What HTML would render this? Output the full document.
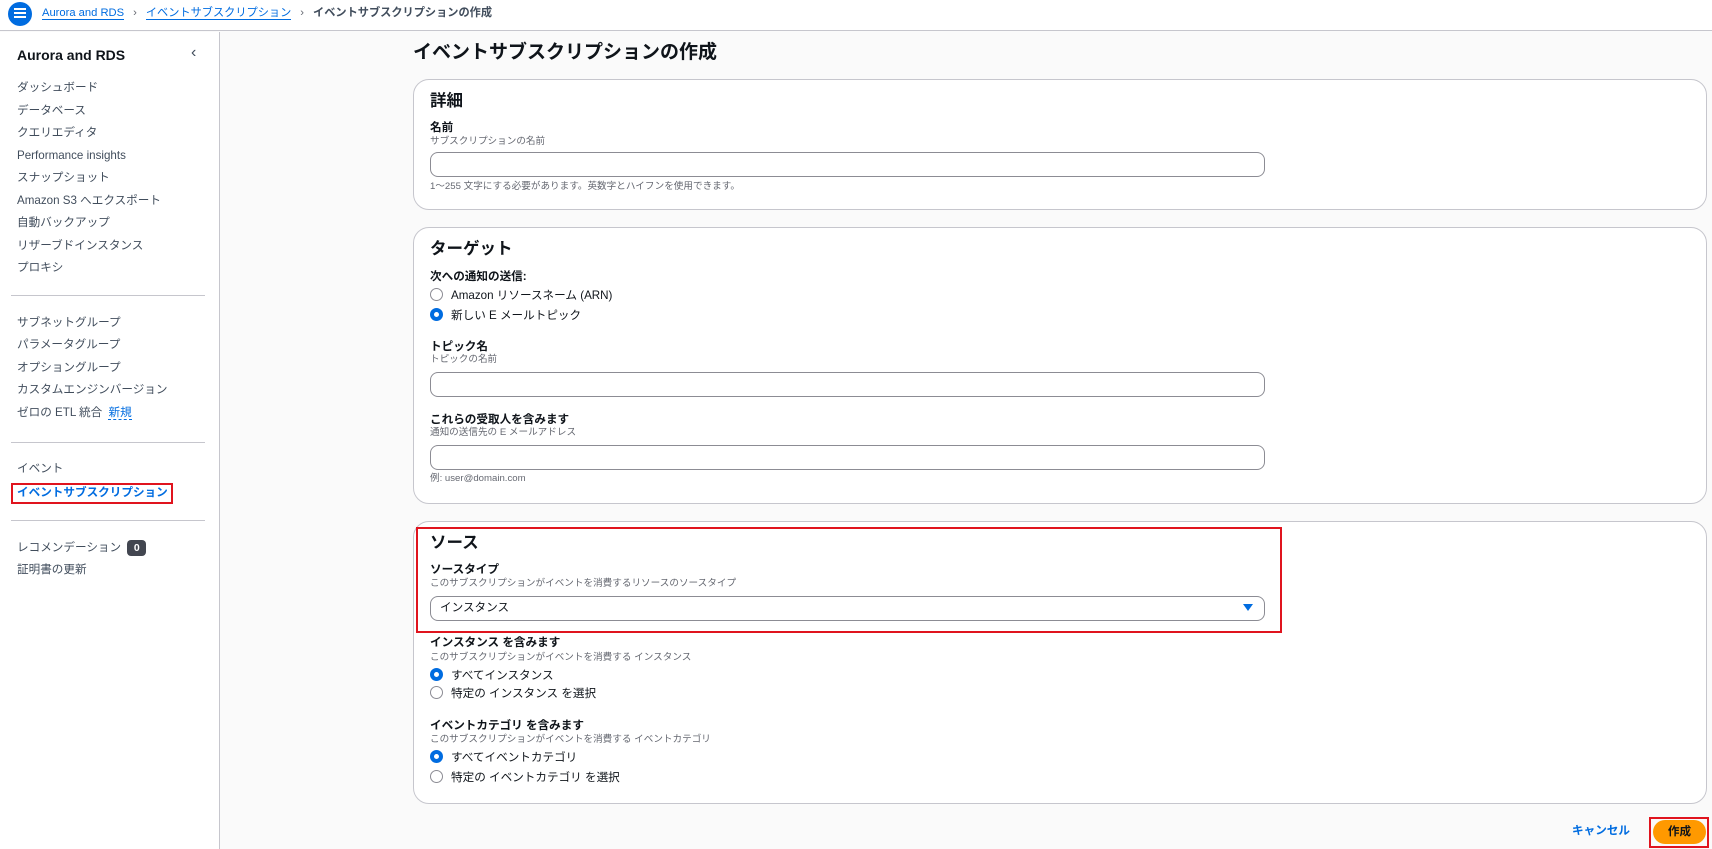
<!DOCTYPE html>
<html><head><meta charset="utf-8"><style>
*{box-sizing:border-box;margin:0;padding:0}
body{width:1712px;height:849px;overflow:hidden;background:#fafafa;font-family:"Liberation Sans","Noto Sans CJK JP",sans-serif;color:#0f141a;position:relative}
.a{position:absolute;white-space:nowrap}
.nav{font-size:11.6px;color:#414d5c;line-height:16px;left:17px}
.card{position:absolute;left:413px;width:1294px;background:#fff;border:1px solid #c6c6cd;border-radius:16px}
.h2{font-size:16.5px;font-weight:bold;line-height:22px;left:430px}
.lbl{font-size:11.6px;font-weight:bold;line-height:16px;left:430px}
.sub{font-size:9.6px;color:#656871;line-height:14px;left:430px}
.inp{position:absolute;left:430px;width:835px;height:25px;border:1px solid #8c8c94;border-radius:8px;background:#fff}
.rad{font-size:11.6px;line-height:16px;left:430px;color:#0f141a}
.rad i{display:inline-block;width:13px;height:13px;border:1px solid #8c8c94;border-radius:50%;vertical-align:-2px;margin-right:8px;background:#fff}
.rad i.on{border:4px solid #006ce0}
.hr{position:absolute;left:11px;width:194px;height:1px;background:#c6c6cd}
</style></head><body>
<div class="a" style="left:0;top:0;width:1712px;height:31px;background:#fff;border-bottom:1px solid #c6c6cd"></div>
<div class="a" style="left:8px;top:2px;width:24px;height:24px;border-radius:50%;background:#006ce0"></div>
<div class="a" style="left:14px;top:8px;width:12px;height:2px;background:#fff;box-shadow:0 4px 0 #fff,0 8px 0 #fff"></div>
<div class="a" style="left:42px;top:5px;font-size:11.2px;line-height:16px;color:#006ce0"><span style="border-bottom:1px solid #006ce0">Aurora and RDS</span><span style="color:#656871;margin:0 9px">&#x203A;</span><span style="border-bottom:1px solid #006ce0">イベントサブスクリプション</span><span style="color:#656871;margin:0 9px">&#x203A;</span><span style="color:#414d5c;font-weight:bold">イベントサブスクリプションの作成</span></div>

<div class="a" style="left:0;top:32px;width:220px;height:817px;background:#fff;border-right:1px solid #c6c6cd"></div>
<div class="a" style="left:17px;top:46px;font-size:14px;font-weight:bold;line-height:18px">Aurora and RDS</div>
<div class="a" style="left:191px;top:44px;font-size:16px;color:#414d5c">&#x2039;</div>
<div class="a nav" style="top:80px">ダッシュボード</div>
<div class="a nav" style="top:103px">データベース</div>
<div class="a nav" style="top:125px">クエリエディタ</div>
<div class="a nav" style="top:148px">Performance insights</div>
<div class="a nav" style="top:170px">スナップショット</div>
<div class="a nav" style="top:193px">Amazon S3 へエクスポート</div>
<div class="a nav" style="top:215px">自動バックアップ</div>
<div class="a nav" style="top:238px">リザーブドインスタンス</div>
<div class="a nav" style="top:260px">プロキシ</div>
<div class="hr" style="top:295px"></div>
<div class="a nav" style="top:315px">サブネットグループ</div>
<div class="a nav" style="top:337px">パラメータグループ</div>
<div class="a nav" style="top:360px">オプショングループ</div>
<div class="a nav" style="top:382px">カスタムエンジンバージョン</div>
<div class="a nav" style="top:405px">ゼロの ETL 統合 <span style="color:#006ce0;border-bottom:1px dashed #006ce0;margin-left:3px">新規</span></div>
<div class="hr" style="top:442px"></div>
<div class="a nav" style="top:461px">イベント</div>
<div class="a" style="left:11px;top:483px;width:162px;height:21px;border:2px solid #e0141e"></div>
<div class="a nav" style="top:485px;color:#006ce0;font-weight:bold">イベントサブスクリプション</div>
<div class="hr" style="top:520px"></div>
<div class="a nav" style="top:540px">レコメンデーション <span style="display:inline-block;background:#424650;color:#fff;font-size:10.5px;font-weight:bold;border-radius:4px;width:19px;text-align:center;line-height:16px;margin-left:3px">0</span></div>
<div class="a nav" style="top:562px">証明書の更新</div>

<div class="a" style="left:413px;top:41px;font-size:19px;font-weight:bold;line-height:24px">イベントサブスクリプションの作成</div>

<div class="card" style="top:79px;height:131px"></div>
<div class="a h2" style="top:90px">詳細</div>
<div class="a lbl" style="top:120px">名前</div>
<div class="a sub" style="top:135px">サブスクリプションの名前</div>
<div class="inp" style="top:152px"></div>
<div class="a sub" style="top:180px">1〜255 文字にする必要があります。英数字とハイフンを使用できます。</div>

<div class="card" style="top:227px;height:277px"></div>
<div class="a h2" style="top:238px">ターゲット</div>
<div class="a lbl" style="top:269px">次への通知の送信:</div>
<div class="a rad" style="top:288px"><i></i>Amazon リソースネーム (ARN)</div>
<div class="a rad" style="top:308px"><i class="on"></i>新しい E メールトピック</div>
<div class="a lbl" style="top:339px">トピック名</div>
<div class="a sub" style="top:353px">トピックの名前</div>
<div class="inp" style="top:372px"></div>
<div class="a lbl" style="top:412px">これらの受取人を含みます</div>
<div class="a sub" style="top:426px">通知の送信先の E メールアドレス</div>
<div class="inp" style="top:445px"></div>
<div class="a sub" style="top:472px">例: user@domain.com</div>

<div class="card" style="top:521px;height:283px"></div>
<div class="a" style="left:416px;top:527px;width:866px;height:106px;border:2px solid #e0141e"></div>
<div class="a h2" style="top:532px">ソース</div>
<div class="a lbl" style="top:562px">ソースタイプ</div>
<div class="a sub" style="top:577px">このサブスクリプションがイベントを消費するリソースのソースタイプ</div>
<div class="inp" style="top:596px"></div>
<div class="a" style="left:440px;top:600px;font-size:11.6px;line-height:16px">インスタンス</div>
<div class="a" style="left:1243px;top:604px;width:0;height:0;border-left:5px solid transparent;border-right:5px solid transparent;border-top:7px solid #006ce0"></div>
<div class="a lbl" style="top:635px">インスタンス を含みます</div>
<div class="a sub" style="top:651px">このサブスクリプションがイベントを消費する インスタンス</div>
<div class="a rad" style="top:668px"><i class="on"></i>すべてインスタンス</div>
<div class="a rad" style="top:686px"><i></i>特定の インスタンス を選択</div>
<div class="a lbl" style="top:718px">イベントカテゴリ を含みます</div>
<div class="a sub" style="top:733px">このサブスクリプションがイベントを消費する イベントカテゴリ</div>
<div class="a rad" style="top:750px"><i class="on"></i>すべてイベントカテゴリ</div>
<div class="a rad" style="top:770px"><i></i>特定の イベントカテゴリ を選択</div>

<div class="a" style="left:1572px;top:823px;font-size:11.6px;font-weight:bold;color:#006ce0;line-height:16px">キャンセル</div>
<div class="a" style="left:1649px;top:817px;width:60px;height:31px;border:2px solid #e0141e"></div>
<div class="a" style="left:1653px;top:820px;width:53px;height:24px;border-radius:12px;background:#ff9900;font-size:11.6px;font-weight:bold;text-align:center;line-height:24px">作成</div>
</body></html>
